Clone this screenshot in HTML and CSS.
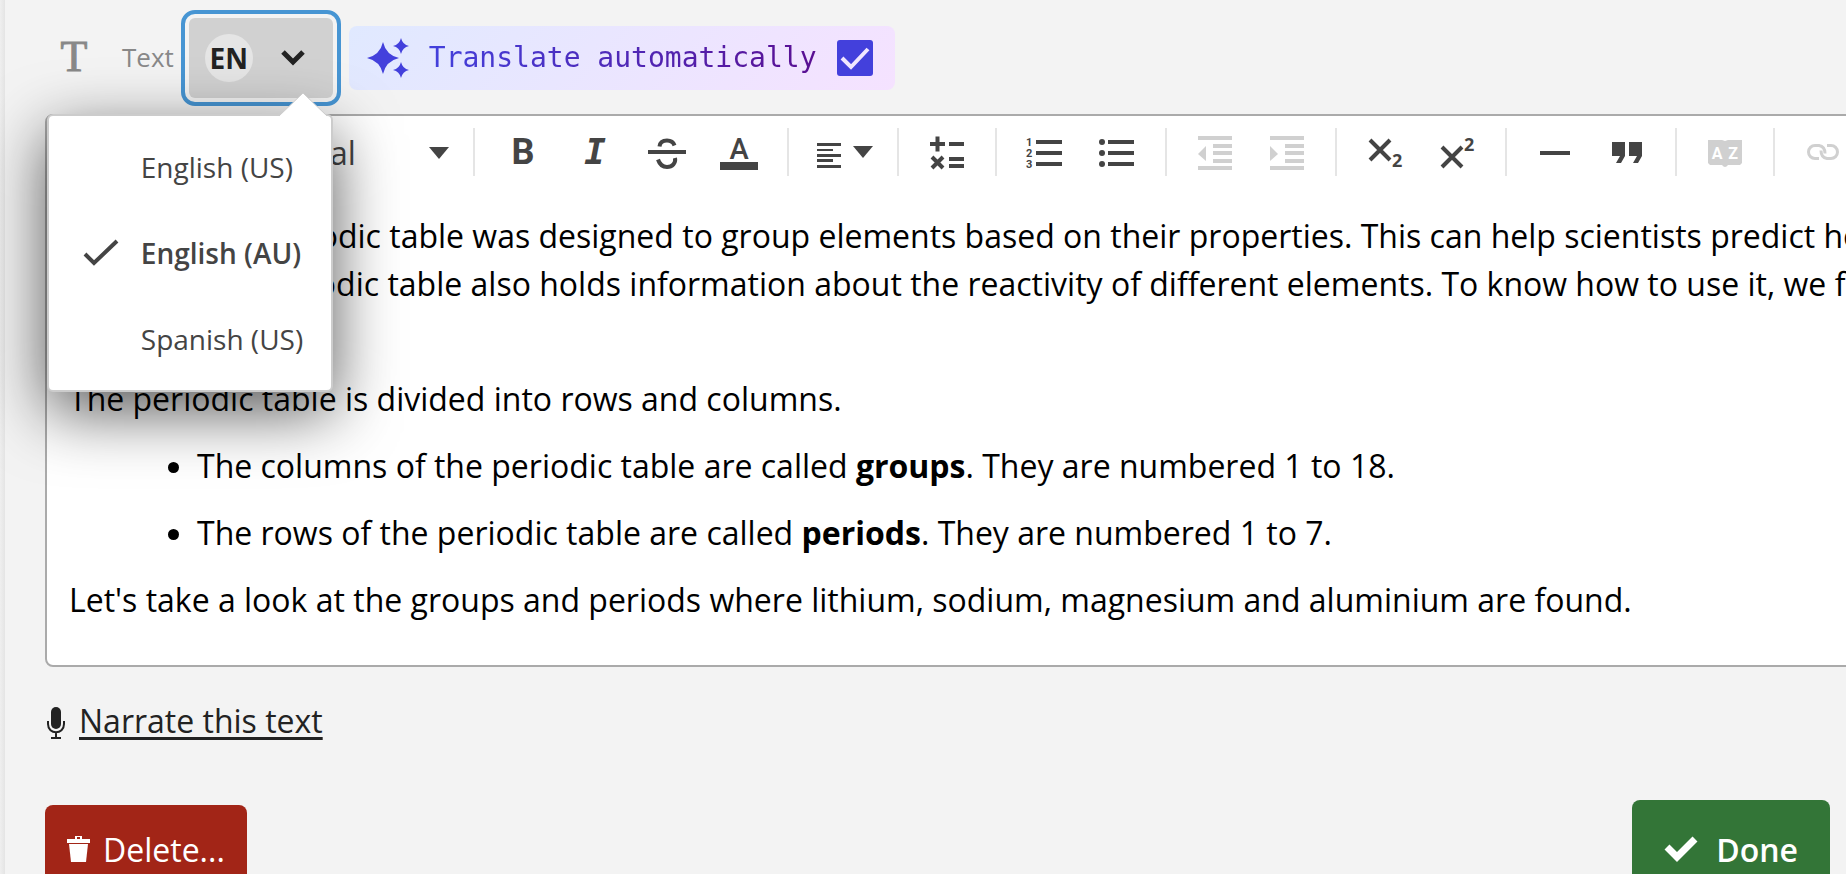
FILE: index.html
```html
<!DOCTYPE html>
<html lang="en">
<head>
    <meta charset="UTF-8">
    <meta name="viewport" content="width=device-width, initial-scale=1.0">
    <title>Edit text</title>
    <link rel="stylesheet" href="styles.css">
</head>
<body>
    <div class="edge"></div>
    <main class="panel">
        <header class="header">
            <svg class="type-icon" width="34" height="60" viewBox="0 0 34 60"><text x="17" y="43" text-anchor="middle">T</text></svg>
            <span class="type-label">Text</span>

            <div class="language">
                <button class="language-btn" type="button" aria-haspopup="listbox" aria-expanded="true">
                    <span class="badge">EN</span>
                    <svg width="24" height="16" viewBox="0 0 24 16"><path d="M2 2l10 10 10-10" fill="none" stroke="#222" stroke-width="5"/></svg>
                </button>
                <div class="menu">
                    <svg class="menu-arrow" width="50" height="26" viewBox="0 0 50 26"><path d="M1 24L25 1l24 23v2H1z" fill="#fff"/><path d="M1 24L25 1l24 23" fill="none" stroke="#ccc" stroke-width="1"/></svg>
                    <button class="menu-item" type="button"><span class="tick"></span>English (US)</button>
                    <button class="menu-item selected" type="button">
                        <span class="tick"><svg width="36" height="28" viewBox="0 0 36 28"><path d="M2 15l9 9L34 2" fill="none" stroke="#444" stroke-width="4"/></svg></span>English (AU)
                    </button>
                    <button class="menu-item" type="button"><span class="tick"></span>Spanish (US)</button>
                </div>
            </div>

            <label class="translate">
                <svg width="48" height="48" viewBox="0 0 48 48" fill="#4340dc">
                    <path d="M18 8Q21 21 34 24Q21 27 18 40Q15 27 2 24Q15 21 18 8z"/>
                    <path d="M36 4Q37.500 10.500 44 12Q37.500 13.500 36 20Q34.500 13.500 28 12Q34.500 10.500 36 4z"/>
                    <path d="M36 28Q37.500 34.500 44 36Q37.500 37.500 36 44Q34.500 37.500 28 36Q34.500 34.500 36 28z"/>
                </svg>
                <span class="translate-text">Translate automatically</span>
                <input type="checkbox" checked>
            </label>
        </header>

        <section class="editor">
            <div class="toolbar">
                <div class="format">
                    <select aria-label="Text format">
                        <option>Normal</option>
                    </select>
                    <svg width="20" height="12" viewBox="0 0 20 12"><path d="M0 0h20L10 12z" fill="#444"/></svg>
                </div>
                <div class="group">
                    <button class="tool" type="button" aria-label="Bold"><svg width="40" height="40" viewBox="0 0 40 40"><text class="icon-b" x="20" y="32" text-anchor="middle">B</text></svg></button>
                    <button class="tool" type="button" aria-label="Italic"><svg width="40" height="40" viewBox="0 0 40 40"><text class="icon-i" x="20" y="32" text-anchor="middle">I</text></svg></button>
                    <button class="tool" type="button" aria-label="Strikethrough"><svg width="40" height="40" viewBox="0 0 40 40" fill="none" stroke="#444" stroke-width="4"><path d="M1 20h38"/><path d="M12.500 14.500C13 10 16 8.500 20 8.500s6.500 2 7.500 5"/><path d="M11 27.500c1.500 4.500 4.500 7.500 9 7.500 5.500 0 9-4 8-9"/></svg></button>
                    <button class="tool" type="button" aria-label="Text colour"><svg width="40" height="40" viewBox="0 0 40 40"><text class="icon-a" x="20" y="27" text-anchor="middle">A</text><path d="M1 30h38v8H1z" fill="#444"/></svg></button>
                </div>
                <div class="group">
                    <button class="tool align" type="button" aria-label="Alignment">
                        <svg width="24" height="40" viewBox="0 0 24 40" fill="#444"><path d="M0 11h24v3H0zM0 17h16v2H0zM0 22h24v3H0zM0 27h16v3H0zM0 33h24v3H0z"/></svg>
                        <svg width="20" height="12" viewBox="0 0 20 12"><path d="M0 0h20L10 12z" fill="#444"/></svg>
                    </button>
                </div>
                <div class="group">
                    <button class="tool" type="button" aria-label="Equation"><svg width="40" height="40" viewBox="0 0 40 40" fill="none" stroke="#444" stroke-width="4"><path d="M3 12h15M10.500 4.500v15M22 12h15M22 27h15M22 34h15M5 25l11 11M16 25L5 36"/></svg></button>
                </div>
                <div class="group">
                    <button class="tool" type="button" aria-label="Numbered list"><svg width="40" height="40" viewBox="0 0 40 40" fill="#444"><text class="icon-num" x="1" y="14">1</text><text class="icon-num" x="1" y="25">2</text><text class="icon-num" x="1" y="36">3</text><path d="M11 8h26v4H11zM11 19h26v4H11zM11 30h26v4H11z"/></svg></button>
                    <button class="tool" type="button" aria-label="Bulleted list"><svg width="40" height="40" viewBox="0 0 40 40" fill="#444"><circle cx="5" cy="10" r="3"/><circle cx="5" cy="21" r="3"/><circle cx="5" cy="32" r="3"/><path d="M11 8h26v4H11zM11 19h26v4H11zM11 30h26v4H11z"/></svg></button>
                </div>
                <div class="group">
                    <button class="tool" type="button" aria-label="Outdent" disabled><svg width="40" height="40" viewBox="0 0 40 40" fill="#d0d0d0"><path d="M3 4h34v4H3zM18 12h19v4H18zM18 19h19v4H18zM18 27h19v4H18zM3 34h34v4H3zM11 14v15l-8-7z"/></svg></button>
                    <button class="tool" type="button" aria-label="Indent" disabled><svg width="40" height="40" viewBox="0 0 40 40" fill="#d0d0d0"><path d="M3 4h34v4H3zM18 12h19v4H18zM18 19h19v4H18zM18 27h19v4H18zM3 34h34v4H3zM3 14v15l8-7z"/></svg></button>
                </div>
                <div class="group">
                    <button class="tool" type="button" aria-label="Subscript"><svg width="40" height="40" viewBox="0 0 40 40"><path d="M5 8l20 20M25 8L5 28" stroke="#444" stroke-width="4"/><text class="icon-two" x="27" y="35">2</text></svg></button>
                    <button class="tool" type="button" aria-label="Superscript"><svg width="40" height="40" viewBox="0 0 40 40"><path d="M5 15l20 20M25 15L5 35" stroke="#444" stroke-width="4"/><text class="icon-two" x="27" y="19">2</text></svg></button>
                </div>
                <div class="group">
                    <button class="tool" type="button" aria-label="Horizontal line"><svg width="40" height="40" viewBox="0 0 40 40"><path d="M5 19h30v4H5z" fill="#444"/></svg></button>
                    <button class="tool" type="button" aria-label="Quote"><svg width="40" height="40" viewBox="0 0 40 40" fill="#444"><path d="M5 10h13v14l-4 7H9l4-7H5zM22 10h13v14l-4 7h-5l4-7h-8z"/></svg></button>
                </div>
                <div class="group">
                    <button class="tool" type="button" aria-label="Glossary" disabled><svg width="40" height="40" viewBox="0 0 40 40"><path d="M3 8h14l3 1 3-1h14v23l-2 2H23q-3 4-6 0H5l-2-2z" fill="#d0d0d0"/><text class="icon-az" x="12" y="27" text-anchor="middle">A</text><text class="icon-az" x="28" y="27" text-anchor="middle">Z</text></svg></button>
                </div>
                <div class="group">
                    <button class="tool" type="button" aria-label="Link" disabled><svg width="40" height="40" viewBox="0 0 40 40" fill="none" stroke="#d0d0d0" stroke-width="3"><path d="M16 26.500h-4a6.500 6.500 0 0 1 0-13h4q6 1 6 8"/><path d="M24 13.500h4a6.500 6.500 0 0 1 0 13h-4q-6-1-6-8"/></svg></button>
                </div>
            </div>

            <div class="content">
                <p class="intro">The modern periodic table was designed to group elements based on their properties. This can help scientists predict how<br>
                behave. The periodic table also holds information about the reactivity of different elements. To know how to use it, we first<br>
                look at its layout.</p>
                <p>The periodic table is divided into rows and columns.</p>
                <ul>
                    <li>The columns of the periodic table are called <strong>groups</strong>. They are numbered 1 to 18.</li>
                    <li>The rows of the periodic table are called <strong>periods</strong>. They are numbered 1 to 7.</li>
                </ul>
                <p>Let's take a look at the groups and periods where lithium, sodium, magnesium and aluminium are found.</p>
            </div>
        </section>

        <div class="narrate">
            <svg width="20" height="38" viewBox="0 0 20 38"><rect x="6" y="5" width="10" height="22" rx="5" fill="#222"/><path d="M3 19v3c0 11 16 11 16 0v-3M11 30v6M6 36h10" fill="none" stroke="#222" stroke-width="2"/></svg>
            <a href="#">Narrate this text</a>
        </div>

        <footer class="footer">
            <button class="btn delete" type="button">
                <svg width="24" height="26" viewBox="0 0 24 26" fill="#fff"><path fill-rule="evenodd" d="M8 0h7v3h8v4H0V3h8zM10 1v2h3V1z"/><path d="M2 8h19l-2 18H4z"/></svg>
                Delete...
            </button>
            <button class="btn done" type="button">
                <svg width="34" height="26" viewBox="0 0 34 26"><path d="M3 11l10 10L31 3" fill="none" stroke="#fff" stroke-width="7"/></svg>
                Done
            </button>
        </footer>
    </main>
</body>
</html>
```
FILE: styles.css
```css
* {
    box-sizing: border-box;
}
body {
    display: flex;
    height: 100vh;
    margin: 0;
    background-color: #f3f3f3;
    font-family: "Open Sans", "Noto Sans", sans-serif;
    font-size: 32px;
    color: #222;
    overflow: hidden;
}
button {
    border: none;
    background: none;
    padding: 0;
    font: inherit;
    color: inherit;
    cursor: pointer;
}
svg {
    display: block;
    flex: none;
}
.edge {
    flex: none;
    width: 5px;
    background: linear-gradient(to right, #efefef, #e4e4e4);
}
.panel {
    flex: 1;
    min-width: 0;
    padding-left: 40px;
}

/* Header row */
.header {
    display: flex;
    align-items: center;
    padding: 18px 0 16px 12px;
}
.type-icon text {
    font-family: "Liberation Serif", serif;
    font-size: 44px;
    fill: #888;
    stroke: #888;
}
.type-label {
    margin: 0 15px 0 31px;
    line-height: 36px;
    padding-bottom: 2px;
    font-size: 26px;
    color: #888;
}
.language {
    position: relative;
    z-index: 10;
    margin-right: 16px;
}
.language-btn {
    display: flex;
    align-items: center;
    gap: 28px;
    height: 80px;
    padding: 0 28px 0 16px;
    border-radius: 6px;
    background-color: #d1d1d1;
    outline: 4px solid #4795d3;
    outline-offset: 4px;
}
.badge {
    width: 48px;
    line-height: 48px;
    border-radius: 50%;
    background-color: #e5e5e5;
    font-size: 28px;
    font-weight: bold;
}

/* Language menu */
.menu {
    position: absolute;
    top: 96px;
    right: 0;
    width: 286px;
    padding: 8px 0;
    border: 2px solid #ccc;
    border-radius: 6px;
    background-color: #fff;
    box-shadow: 0 20px 64px rgba(0, 0, 0, 0.65);
}
.menu-arrow {
    position: absolute;
    top: -24px;
    right: 3px;
}
.menu-item {
    display: flex;
    align-items: center;
    width: 100%;
    height: 86px;
    padding: 0 0 0 34px;
    font-size: 28px;
    color: #444;
    white-space: nowrap;
}
.menu-item.selected {
    font-weight: 600;
}
.tick {
    width: 58px;
}

/* Translate toggle */
.translate {
    display: flex;
    align-items: center;
    height: 64px;
    padding: 0 22px 0 16px;
    border-radius: 8px;
    background: linear-gradient(135deg, #e0e9ff, #f5e2ff);
}
.translate-text {
    margin: 0 20px 0 16px;
    padding-bottom: 2px;
    font-family: "DejaVu Sans Mono", monospace;
    font-size: 28px;
    background: linear-gradient(to right, #4340dc, #5a0f92);
    background-clip: text;
    -webkit-background-clip: text;
    color: transparent;
}
.translate input {
    appearance: none;
    width: 36px;
    height: 36px;
    margin: 0;
    border-radius: 3px;
    background: #4340dc url("data:image/svg+xml,%3Csvg xmlns='http://www.w3.org/2000/svg' viewBox='0 0 36 36'%3E%3Cpath d='M5 18l9 9L31 9' fill='none' stroke='%23f0e6ff' stroke-width='4'/%3E%3C/svg%3E");
}

/* Editor, runs on past the right side of the window */
.editor {
    margin-right: -16px;
    border: 2px solid #aaa;
    border-radius: 8px;
    background-color: #fff;
}
.toolbar {
    display: flex;
    padding-top: 12px;
}
.format {
    position: relative;
    flex: none;
    width: 426px;
    padding-left: 197px;
}
.format select {
    appearance: none;
    width: 100%;
    height: 48px;
    padding: 0;
    border: none;
    background: none;
    font: inherit;
    color: #444;
}
.format svg {
    position: absolute;
    top: 19px;
    right: 24px;
}
.group {
    display: flex;
    flex: none;
    padding: 0 12px;
    border-left: 2px solid #e5e5e5;
}
.tool {
    display: flex;
    align-items: center;
    justify-content: center;
    width: 72px;
    height: 48px;
}
.tool.align {
    gap: 12px;
    width: 84px;
    padding-left: 4px;
}
.tool text {
    font-family: Roboto, sans-serif;
    fill: #444;
}
.tool .icon-b {
    font-size: 36px;
    font-weight: bold;
}
.tool .icon-i {
    font-family: "DejaVu Sans Mono", monospace;
    font-size: 36px;
    font-weight: bold;
    font-style: italic;
}
.tool .icon-a {
    font-size: 29px;
    font-weight: 500;
}
.tool .icon-num {
    font-size: 11px;
    font-weight: bold;
}
.tool .icon-two {
    font-family: "Noto Sans", sans-serif;
    font-size: 18px;
    font-weight: bold;
}
.tool .icon-az {
    font-size: 16px;
    font-weight: bold;
    fill: #fff;
}
.content {
    padding: 36px 22px 41px;
    line-height: 48px;
    color: #000;
}
.content p,
.content ul {
    margin: 0 0 19px;
}
.content p:last-child {
    margin-bottom: 0;
}
.content ul {
    padding-left: 128px;
}
.content li + li {
    margin-top: 19px;
}
.intro {
    white-space: nowrap;
}

/* Below the editor */
.narrate {
    display: flex;
    align-items: center;
    gap: 14px;
    margin-top: 30px;
}
.narrate a {
    color: #222;
    line-height: 48px;
    text-decoration-thickness: 3px;
    text-underline-offset: 4px;
}
.footer {
    display: flex;
    align-items: center;
    justify-content: space-between;
    margin-top: 55px;
    padding-right: 16px;
}
.btn {
    display: flex;
    align-items: center;
    border-radius: 8px;
    color: #fff;
}
.delete {
    gap: 12px;
    height: 88px;
    padding: 0 22px;
    background-color: #a22517;
}
.done {
    gap: 18px;
    height: 98px;
    padding: 0 32px;
    background-color: #337537;
    font-weight: 600;
}
```
